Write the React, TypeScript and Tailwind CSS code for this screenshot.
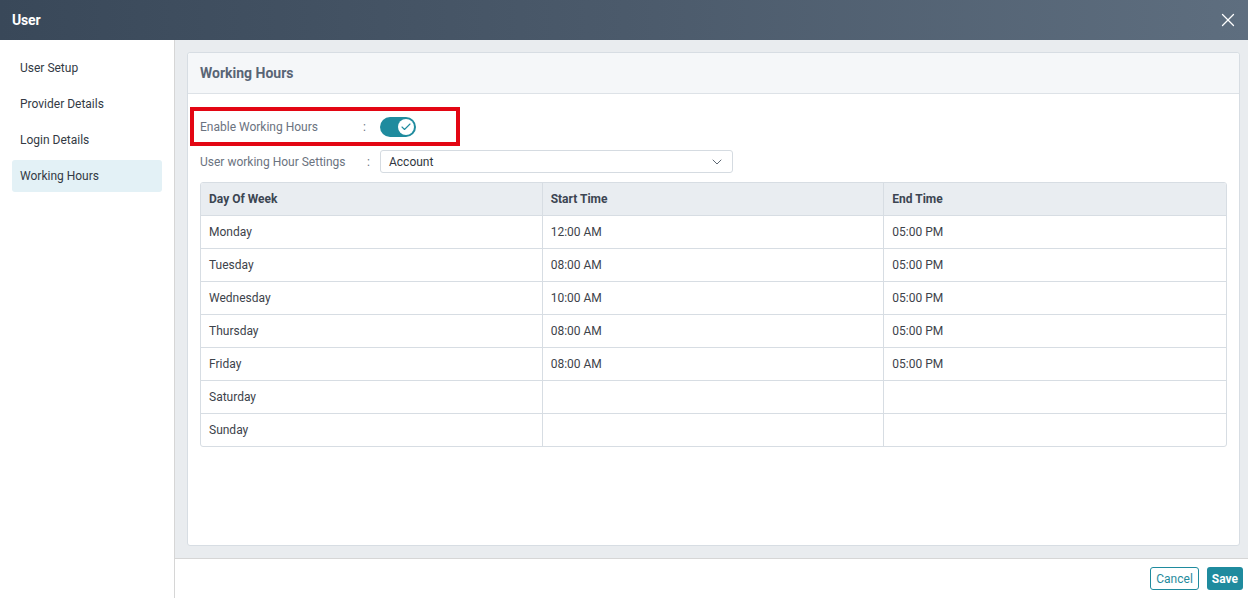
import { X, ChevronDown, Check } from "lucide-react";

const navItems = ["User Setup", "Provider Details", "Login Details", "Working Hours"];

const hours: { day: string; start: string; end: string }[] = [
  { day: "Monday", start: "12:00 AM", end: "05:00 PM" },
  { day: "Tuesday", start: "08:00 AM", end: "05:00 PM" },
  { day: "Wednesday", start: "10:00 AM", end: "05:00 PM" },
  { day: "Thursday", start: "08:00 AM", end: "05:00 PM" },
  { day: "Friday", start: "08:00 AM", end: "05:00 PM" },
  { day: "Saturday", start: "", end: "" },
  { day: "Sunday", start: "", end: "" },
];

export default function App() {
  return (
    <div className="flex h-[598px] w-[1248px] flex-col overflow-hidden bg-white font-['Roboto',sans-serif] text-[12px]">
      <header className="flex h-[40px] shrink-0 items-center justify-between bg-[linear-gradient(90deg,#394859_0%,#4b5a6b_50%,#5e6e7f_100%)] pl-[12px] pr-[9px]">
        <span className="text-[14px] font-bold tracking-[-0.2px] text-white">User</span>
        <X className="h-[22px] w-[22px] text-white" strokeWidth={1.4} />
      </header>

      <div className="flex min-h-0 flex-1">
        <aside className="w-[175px] shrink-0 border-r border-[#d6d6d6] px-[12px] pt-[12px]">
          {navItems.map((item) => (
            <div
              key={item}
              className={`mb-[4px] flex h-[32px] items-center rounded-[3px] px-[8px] text-[12px] text-[#333a44] ${
                item === "Working Hours" ? "bg-[#e3f1f6]" : ""
              }`}
            >
              {item}
            </div>
          ))}
        </aside>

        <div className="flex min-w-0 flex-1 flex-col">
          <main className="flex min-h-0 flex-1 bg-[#e9ecef] p-[12px] pr-[8px]">
            <section className="flex flex-1 flex-col rounded-[3px] border border-[#d7dde3] bg-white">
              <div className="flex h-[41px] items-center rounded-t-[3px] border-b border-[#dde2e7] bg-[#f5f7f9] px-[12px] text-[14px] font-bold text-[#596575]">
                Working Hours
              </div>

              <div className="px-[12px] pt-[13px]">
                <div className="-ml-[10px] flex h-[39px] w-[270px] items-center border-[4px] border-[#e30613] pl-[6px] pt-[1px]">
                  <span className="w-[163px] text-[12px] text-[#6b7380]">Enable Working Hours</span>
                  <span className="w-[17px] text-[#6b7380]">:</span>
                  <div className="flex h-[20px] w-[36px] items-center justify-end rounded-full bg-[#1f8b9e] pr-[2px]">
                    <div className="flex h-[16px] w-[16px] items-center justify-center rounded-full bg-white">
                      <Check className="h-[12px] w-[12px] text-[#1f8b9e]" strokeWidth={2.2} />
                    </div>
                  </div>
                </div>

                <div className="mt-[4px] flex h-[23px] items-center">
                  <span className="w-[167px] text-[12px] text-[#6b7380]">User working Hour Settings</span>
                  <span className="w-[13px] text-[#6b7380]">:</span>
                  <div className="flex h-[23px] w-[353px] items-center justify-between rounded-[3px] border border-[#d5dbe1] pl-[8px] pr-[7px] text-[12px] text-[#2f3640]">
                    <span>Account</span>
                    <ChevronDown className="h-[16px] w-[16px] text-[#5d6773]" strokeWidth={1.5} />
                  </div>
                </div>

                <div className="mt-[9px] overflow-hidden rounded-[3px] border border-[#d7dde3]">
                  <div className="grid h-[32px] grid-cols-3 bg-[#e9edf1] text-[12px] font-bold text-[#3c4552]">
                    <div className="flex items-center border-r border-[#d7dde3] px-[8px]">Day Of Week</div>
                    <div className="flex items-center border-r border-[#d7dde3] px-[8px]">Start Time</div>
                    <div className="flex items-center px-[8px]">End Time</div>
                  </div>
                  {hours.map((row) => (
                    <div key={row.day} className="grid h-[33px] grid-cols-3 border-t border-[#d7dde3] text-[12px] text-[#3d434b]">
                      <div className="flex items-center border-r border-[#d7dde3] px-[8px]">{row.day}</div>
                      <div className="flex items-center border-r border-[#d7dde3] px-[8px]">{row.start}</div>
                      <div className="flex items-center px-[8px]">{row.end}</div>
                    </div>
                  ))}
                </div>
              </div>
            </section>
          </main>

          <footer className="flex h-[40px] shrink-0 items-center justify-end gap-[8px] border-t border-[#d6d6d6] bg-white pr-[5px]">
            <button
              type="button"
              className="h-[23px] rounded-[3px] border border-[#1f8b9e] bg-white px-[5px] text-[12px] text-[#1f8b9e]"
            >
              Cancel
            </button>
            <button
              type="button"
              className="h-[23px] rounded-[3px] bg-[#1f8b9e] px-[5px] text-[12px] font-bold text-white"
            >
              Save
            </button>
          </footer>
        </div>
      </div>
    </div>
  );
}
